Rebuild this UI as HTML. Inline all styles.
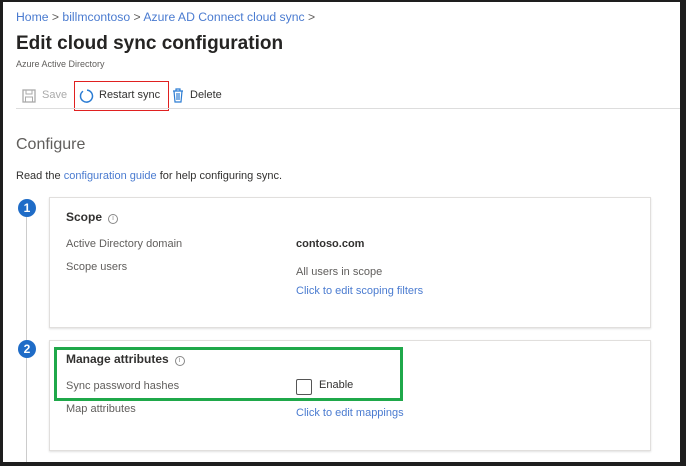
<!DOCTYPE html>
<html><head><style>
*{margin:0;padding:0;box-sizing:border-box}
body{width:686px;height:466px;background:#1e1e1e;position:relative;overflow:hidden;font-family:"Segoe UI","Liberation Sans",sans-serif;color:#323130}
#pg{position:absolute;left:3px;top:2px;width:677px;height:460px;background:#fff;overflow:hidden}
.a{position:absolute;white-space:nowrap}
.lk{color:#4a7bd0}
.g{color:#605e5c}
.card{position:absolute;left:46px;width:602px;border:1px solid #e1dfdd;box-shadow:0 1px 2px rgba(0,0,0,.12);background:#fff}
.num{position:absolute;left:15px;width:18px;height:18px;border-radius:50%;background:#1f6cc7;color:#fff;font-weight:bold;font-size:12px;text-align:center;line-height:18px}
.info{display:inline-block;width:10px;height:10px;border:1px solid #888;border-radius:50%;font-size:7px;line-height:8px;text-align:center;color:#888;vertical-align:1px;margin-left:6px;font-weight:normal}
</style></head><body><div id="pg">
<div class="a lk" style="left:13px;top:8px;font-size:12.2px">Home <span class="g">&gt;</span> billmcontoso <span class="g">&gt;</span> Azure AD Connect cloud sync <span class="g">&gt;</span></div>
<div class="a" style="left:13px;top:31px;font-size:19px;font-weight:600;color:#252423">Edit cloud sync configuration</div>
<div class="a g" style="left:13px;top:57px;font-size:9px">Azure Active Directory</div>
<svg class="a" style="left:19px;top:87px" width="14" height="14" viewBox="0 0 14 14"><rect x="1" y="1" width="12" height="12" fill="none" stroke="#aaa" stroke-width="1.3"/><rect x="4" y="1" width="6" height="4" fill="none" stroke="#aaa"/><rect x="3.5" y="8" width="7" height="5" fill="none" stroke="#aaa"/></svg>
<div class="a" style="left:39px;top:87px;font-size:11px;color:#aaa">Save</div>
<div class="a" style="left:71px;top:79px;width:95px;height:30px;border:1px solid #e02020"></div>
<svg class="a" style="left:75px;top:86px" width="16" height="16" viewBox="0 0 16 16"><path d="M5 3.2A6 6 0 1 0 9 2.1" fill="none" stroke="#2b7cd3" stroke-width="1.5"/></svg>
<div class="a" style="left:96px;top:87px;font-size:11px">Restart sync</div>
<svg class="a" style="left:169px;top:86px" width="12" height="15" viewBox="0 0 12 15"><path d="M1 3h10M4 3V1h4v2M2 3l1 11h6l1-11M5 5v7M7 5v7" fill="none" stroke="#2b7cd3" stroke-width="1.2"/></svg>
<div class="a" style="left:187px;top:87px;font-size:11px">Delete</div>
<div class="a" style="left:13px;top:106px;width:664px;height:1px;background:#ddd"></div>
<div class="a g" style="left:13px;top:134px;font-size:16px;font-weight:300">Configure</div>
<div class="a" style="left:13px;top:168px;font-size:11px">Read the <span class="lk">configuration guide</span> for help configuring sync.</div>
<div class="a" style="left:23px;top:210px;width:1px;height:260px;background:#ccc"></div>
<div class="num" style="top:197px">1</div>
<div class="num" style="top:338px">2</div>
<div class="card" style="top:195px;height:131px"></div>
<div class="a" style="left:63px;top:208px;font-size:12px;font-weight:bold">Scope<span class="info">i</span></div>
<div class="a g" style="left:63px;top:236px;font-size:11px">Active Directory domain</div>
<div class="a" style="left:293px;top:236px;font-size:11px;font-weight:bold">contoso.com</div>
<div class="a g" style="left:63px;top:259px;font-size:11px">Scope users</div>
<div class="a g" style="left:293px;top:264px;font-size:11px">All users in scope</div>
<div class="a lk" style="left:293px;top:283px;font-size:11px">Click to edit scoping filters</div>
<div class="card" style="top:338px;height:111px"></div>
<div class="a" style="left:63px;top:350px;font-size:12px;font-weight:bold">Manage attributes<span class="info">i</span></div>
<div class="a g" style="left:63px;top:378px;font-size:11px">Sync password hashes</div>
<div class="a" style="left:293px;top:377px;width:16px;height:16px;border:1px solid #555;border-radius:2px"></div>
<div class="a" style="left:316px;top:377px;font-size:11px">Enable</div>
<div class="a g" style="left:63px;top:401px;font-size:11px">Map attributes</div>
<div class="a lk" style="left:293px;top:405px;font-size:11px">Click to edit mappings</div>
<div class="a" style="left:51px;top:345px;width:349px;height:54px;border:3px solid #1fa84a"></div>
</div></body></html>
